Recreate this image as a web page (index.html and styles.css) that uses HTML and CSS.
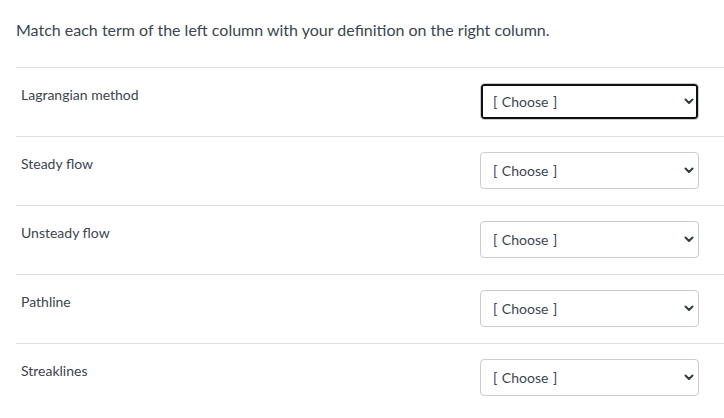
FILE: index.html
```html
<!DOCTYPE html>
<html>
<head>
<meta charset="utf-8">
<link rel="stylesheet" href="styles.css">
</head>
<body>
<div class="quiz">
  <p class="prompt">Match each term of the left column with your definition on the right column.</p>
  <div class="rows">
    <div class="row">
      <div class="term">Lagrangian method</div>
      <div class="select focused"><span>[ Choose ]</span><svg class="chev" width="10" height="7" viewBox="0 0 10 7"><path d="M1.5 1.5 L5 5 L8.5 1.5" fill="none" stroke="#2d3b45" stroke-width="2" stroke-linecap="round" stroke-linejoin="round"/></svg></div>
    </div>
    <div class="row">
      <div class="term">Steady flow</div>
      <div class="select"><span>[ Choose ]</span><svg class="chev" width="10" height="7" viewBox="0 0 10 7"><path d="M1.5 1.5 L5 5 L8.5 1.5" fill="none" stroke="#2d3b45" stroke-width="2" stroke-linecap="round" stroke-linejoin="round"/></svg></div>
    </div>
    <div class="row">
      <div class="term">Unsteady flow</div>
      <div class="select"><span>[ Choose ]</span><svg class="chev" width="10" height="7" viewBox="0 0 10 7"><path d="M1.5 1.5 L5 5 L8.5 1.5" fill="none" stroke="#2d3b45" stroke-width="2" stroke-linecap="round" stroke-linejoin="round"/></svg></div>
    </div>
    <div class="row">
      <div class="term">Pathline</div>
      <div class="select"><span>[ Choose ]</span><svg class="chev" width="10" height="7" viewBox="0 0 10 7"><path d="M1.5 1.5 L5 5 L8.5 1.5" fill="none" stroke="#2d3b45" stroke-width="2" stroke-linecap="round" stroke-linejoin="round"/></svg></div>
    </div>
    <div class="row">
      <div class="term">Streaklines</div>
      <div class="select"><span>[ Choose ]</span><svg class="chev" width="10" height="7" viewBox="0 0 10 7"><path d="M1.5 1.5 L5 5 L8.5 1.5" fill="none" stroke="#2d3b45" stroke-width="2" stroke-linecap="round" stroke-linejoin="round"/></svg></div>
    </div>
  </div>
</div>
</body>
</html>
```
FILE: styles.css
```css
html, body {
  margin: 0;
  padding: 0;
  background: #fff;
}
body {
  font-family: Lato, "Liberation Sans", sans-serif;
  color: #3a4650;
}
.quiz {
  padding-left: 16px;
}
.prompt {
  margin: 20px 0 27px 0;
  font-size: 16px;
  line-height: 20px;
}
.row {
  display: flex;
  justify-content: space-between;
  align-items: flex-start;
  border-top: 1px solid #dcdfe2;
  padding: 15px 25px 16px 5px;
}
.term {
  font-size: 14px;
  line-height: 20px;
  padding-top: 2px;
}
.select {
  box-sizing: border-box;
  width: 219px;
  height: 37px;
  border: 1px solid #c7cdd1;
  border-radius: 4px;
  display: flex;
  align-items: center;
  justify-content: space-between;
  padding: 0 4px 0 12px;
  font-size: 14px;
  word-spacing: 1px;
  color: #3a4650;
  background: #fff;
}
.select.focused {
  box-shadow: inset 0 0 0 2px #111;
}
.chev {
  display: block;
}
```
